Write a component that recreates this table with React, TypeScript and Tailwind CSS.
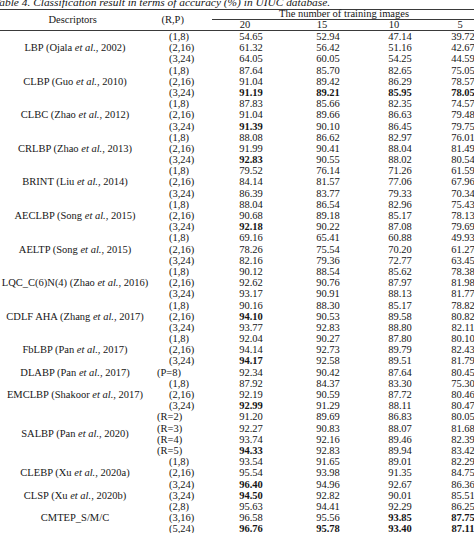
import React from "react";

type Group = {
  name: string;
  author: string;
  year: string;
  rows: { rp: string; wide?: boolean; v: string[] }[];
};

// "*" marks a bold (best) value
const groups: Group[] = [
  { name: "LBP", author: "Ojala", year: "2002", rows: [
    { rp: "(1,8)", v: ["54.65", "52.94", "47.14", "39.72"] },
    { rp: "(2,16)", v: ["61.32", "56.42", "51.16", "42.67"] },
    { rp: "(3,24)", v: ["64.05", "60.05", "54.25", "44.59"] },
  ] },
  { name: "CLBP", author: "Guo", year: "2010", rows: [
    { rp: "(1,8)", v: ["87.64", "85.70", "82.65", "75.05"] },
    { rp: "(2,16)", v: ["91.04", "89.42", "86.29", "78.57"] },
    { rp: "(3,24)", v: ["*91.19", "*89.21", "*85.95", "*78.05"] },
  ] },
  { name: "CLBC", author: "Zhao", year: "2012", rows: [
    { rp: "(1,8)", v: ["87.83", "85.66", "82.35", "74.57"] },
    { rp: "(2,16)", v: ["91.04", "89.66", "86.63", "79.48"] },
    { rp: "(3,24)", v: ["*91.39", "90.10", "86.45", "79.75"] },
  ] },
  { name: "CRLBP", author: "Zhao", year: "2013", rows: [
    { rp: "(1,8)", v: ["88.08", "86.62", "82.97", "76.01"] },
    { rp: "(2,16)", v: ["91.99", "90.41", "88.04", "81.49"] },
    { rp: "(3,24)", v: ["*92.83", "90.55", "88.02", "80.54"] },
  ] },
  { name: "BRINT", author: "Liu", year: "2014", rows: [
    { rp: "(1,8)", v: ["79.52", "76.14", "71.26", "61.59"] },
    { rp: "(2,16)", v: ["84.14", "81.57", "77.06", "67.96"] },
    { rp: "(3,24)", v: ["86.39", "83.77", "79.33", "70.34"] },
  ] },
  { name: "AECLBP", author: "Song", year: "2015", rows: [
    { rp: "(1,8)", v: ["88.04", "86.54", "82.96", "75.43"] },
    { rp: "(2,16)", v: ["90.68", "89.18", "85.17", "78.13"] },
    { rp: "(3,24)", v: ["*92.18", "90.22", "87.08", "79.69"] },
  ] },
  { name: "AELTP", author: "Song", year: "2015", rows: [
    { rp: "(1,8)", v: ["69.16", "65.41", "60.88", "49.93"] },
    { rp: "(2,16)", v: ["78.26", "75.54", "70.20", "61.27"] },
    { rp: "(3,24)", v: ["82.16", "79.36", "72.77", "63.45"] },
  ] },
  { name: "LQC_C(6)N(4)", author: "Zhao", year: "2016", rows: [
    { rp: "(1,8)", v: ["90.12", "88.54", "85.62", "78.38"] },
    { rp: "(2,16)", v: ["92.62", "90.76", "87.97", "81.98"] },
    { rp: "(3,24)", v: ["93.17", "90.91", "88.13", "81.77"] },
  ] },
  { name: "CDLF AHA", author: "Zhang", year: "2017", rows: [
    { rp: "(1,8)", v: ["90.16", "88.30", "85.17", "78.82"] },
    { rp: "(2,16)", v: ["*94.10", "90.53", "89.58", "80.82"] },
    { rp: "(3,24)", v: ["93.77", "92.83", "88.80", "82.11"] },
  ] },
  { name: "FbLBP", author: "Pan", year: "2017", rows: [
    { rp: "(1,8)", v: ["92.04", "90.27", "87.80", "80.10"] },
    { rp: "(2,16)", v: ["94.14", "92.73", "89.79", "82.43"] },
    { rp: "(3,24)", v: ["*94.17", "92.58", "89.51", "81.79"] },
  ] },
  { name: "DLABP", author: "Pan", year: "2017", rows: [
    { rp: "(P=8)", wide: true, v: ["92.34", "90.42", "87.64", "80.45"] },
  ] },
  { name: "EMCLBP", author: "Shakoor", year: "2017", rows: [
    { rp: "(1,8)", v: ["87.92", "84.37", "83.30", "75.30"] },
    { rp: "(2,16)", v: ["92.19", "90.59", "87.72", "80.46"] },
    { rp: "(3,24)", v: ["*92.99", "91.29", "88.11", "80.47"] },
  ] },
  { name: "SALBP", author: "Pan", year: "2020", rows: [
    { rp: "(R=2)", wide: true, v: ["91.20", "89.69", "86.83", "80.05"] },
    { rp: "(R=3)", wide: true, v: ["92.27", "90.83", "88.07", "81.68"] },
    { rp: "(R=4)", wide: true, v: ["93.74", "92.16", "89.46", "82.39"] },
    { rp: "(R=5)", wide: true, v: ["*94.33", "92.83", "89.94", "83.42"] },
  ] },
  { name: "CLEBP", author: "Xu", year: "2020a", rows: [
    { rp: "(1,8)", v: ["93.54", "91.65", "89.01", "82.29"] },
    { rp: "(2,16)", v: ["95.54", "93.98", "91.35", "84.75"] },
    { rp: "(3,24)", v: ["*96.40", "94.96", "92.67", "86.36"] },
  ] },
  { name: "CLSP", author: "Xu", year: "2020b", rows: [
    { rp: "(3,24)", v: ["*94.50", "92.82", "90.01", "85.51"] },
  ] },
  { name: "CMTEP_S/M/C", author: "", year: "", rows: [
    { rp: "(2,8)", v: ["95.63", "94.41", "92.29", "86.25"] },
    { rp: "(3,16)", v: ["96.58", "95.56", "*93.85", "*87.75"] },
    { rp: "(5,24)", v: ["*96.76", "*95.78", "*93.40", "*87.11"] },
  ] },
];

const spans: Record<number, string> = { 1: "row-span-1", 3: "row-span-3", 4: "row-span-4" };

function Label({ g }: { g: Group }) {
  if (!g.author) return <>{g.name}</>;
  return (
    <>
      {g.name} ({g.author} <i>et al.</i>, {g.year})
    </>
  );
}

function Num({ v }: { v: string }) {
  const bold = v.startsWith("*");
  return (
    <div className={bold ? "text-center font-bold" : "text-center"}>{bold ? v.slice(1) : v}</div>
  );
}

export default function App() {
  return (
    <div className="w-[474px] h-[533px] overflow-hidden bg-white text-[#161616] font-['Liberation_Serif',serif] text-[10.5px]">
      <div className="h-[9px] flex items-end">
        <div className="-ml-[6px] mb-[1px] whitespace-nowrap text-[11.4px] leading-[11px] italic">
          Table 4. Classification result in terms of accuracy (%) in UIUC database.
        </div>
      </div>

      <div className="w-[494px]">
        <div className="flex h-[22px] border-y border-[#3a3a3a]">
          <div className="w-[150px] flex items-center justify-center">Descriptors</div>
          <div className="w-[64px] flex items-center pl-[16px]">(R,P)</div>
          <div className="flex-1 ml-[4px] flex flex-col">
            <div className="h-[10px] border-b border-[#3a3a3a] w-[264px] text-center leading-[8px]">
              The number of training images
            </div>
            <div className="h-[10px] flex items-center -ml-[4px] leading-[10px]">
              <div className="w-[74px] text-center">20</div>
              <div className="w-[80px] text-center">15</div>
              <div className="w-[64px] text-center">10</div>
              <div className="w-[68px] text-center">5</div>
            </div>
          </div>
        </div>

        <div className="grid grid-cols-[150px_64px_74px_80px_64px_62px] auto-rows-[11.2px] leading-[11.2px]">
          {groups.map((g) => (
            <React.Fragment key={g.name + g.year}>
              <div className={`${spans[g.rows.length]} col-start-1 flex items-center justify-center whitespace-nowrap`}>
                <span>
                  <Label g={g} />
                </span>
              </div>
              {g.rows.map((r, i) => (
                <React.Fragment key={i}>
                  <div className={r.wide ? "col-start-2 pl-[7px]" : "col-start-2 pl-[19px]"}>{r.rp}</div>
                  {r.v.map((v, j) => (
                    <Num key={j} v={v} />
                  ))}
                </React.Fragment>
              ))}
            </React.Fragment>
          ))}
        </div>
      </div>
    </div>
  );
}
